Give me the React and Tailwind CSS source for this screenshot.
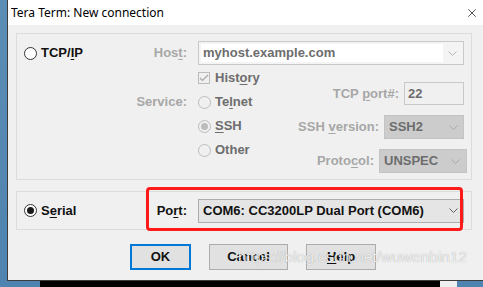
import { X } from "lucide-react";

const font = { fontFamily: '"Liberation Sans", Arial, sans-serif' };

function Chevron({ color = "#9a9a9a" }) {
  return (
    <svg width="9" height="5" viewBox="0 0 9 5" className="shrink-0">
      <polyline points="0.5,0.5 4.5,4.5 8.5,0.5" fill="none" stroke={color} strokeWidth="1" />
    </svg>
  );
}

function Radio({ checked, disabled }) {
  return (
    <span
      className={`w-[13px] h-[13px] rounded-full border flex items-center justify-center shrink-0 ${
        disabled ? "border-[#bcbcbc] bg-[#f0f0f0]" : "border-[#333] bg-white"
      }`}
    >
      {checked && (
        <span className={`w-[7px] h-[7px] rounded-full ${disabled ? "bg-[#bcbcbc]" : "bg-[#1a1a1a]"}`} />
      )}
    </span>
  );
}

function U({ children }) {
  return <span className="underline underline-offset-2 decoration-1">{children}</span>;
}

export default function App() {
  return (
    <div
      className="w-[483px] h-[287px] overflow-hidden bg-[#5b8db5] flex flex-col text-[13px] font-bold"
      style={font}
    >
      <div className="flex h-[281px]">
        {/* desktop strip */}
        <div className="w-[7px] bg-gradient-to-b from-[#5b8db5] to-[#4f84b0]" />
        {/* dialog */}
        <div className="flex-1 border-l border-b border-[#3c3c3c] flex flex-col relative">
          {/* title bar */}
          <div className="h-[25px] bg-white flex items-center justify-between pl-[3px] pr-[4px]">
            <span className="text-[12px] font-normal text-black" style={{ fontFamily: '"Noto Sans", "Liberation Sans", sans-serif' }}>
              Tera Term: New connection
            </span>
            <X className="w-[14px] h-[14px] text-[#111]" strokeWidth={1.2} />
          </div>

          {/* body */}
          <div className="flex-1 bg-[#f0f0f0] pl-[8px] pt-[8px]">
            {/* TCP/IP group */}
            <div className="w-[456px] h-[147px] border border-[#dcdcdc] flex flex-col">
              <div className="flex items-center h-[24px] mt-[7px]">
                <div className="w-[176px] flex items-center justify-between pl-[7px] pr-[6px] h-full">
                  <span className="flex items-center gap-[4px] text-[#111]">
                    <Radio />
                    <span>TCP/<U>I</U>P</span>
                  </span>
                  <span className="text-[#a7a7a7]">
                    Hos<U>t</U>:
                  </span>
                </div>
                <div className="ml-[5px] w-[266px] h-[24px] border border-[#c9c9c9] bg-[#f4f4f4] flex items-center p-[2px]">
                  <div className="flex-1 h-full bg-white flex items-center pl-[2px] text-[#6d6d6d]">
                    myhost.example.com
                  </div>
                  <div className="w-[18px] flex justify-center">
                    <Chevron color="#b5b5b5" />
                  </div>
                </div>
              </div>

              <div className="flex mt-[1px]">
                {/* labels */}
                <div className="w-[176px] pr-[6px] flex flex-col items-end">
                  <div className="h-[24px]" />
                  <div className="h-[24px] flex items-center text-[#a7a7a7]">Service:</div>
                </div>
                {/* checkbox + radios */}
                <div className="ml-[5px] w-[100px] flex flex-col text-[#6d6d6d]">
                  <div className="h-[24px] flex items-center gap-[5px]">
                    <span className="w-[12px] h-[12px] border border-[#bcbcbc] bg-[#f0f0f0] flex items-center justify-center">
                      <svg width="10" height="8" viewBox="0 0 10 8">
                        <polyline points="1,4 3.5,6.5 9,1" fill="none" stroke="#a8a8a8" strokeWidth="1.2" />
                      </svg>
                    </span>
                    <span>
                      Hist<U>o</U>ry
                    </span>
                  </div>
                  <div className="h-[24px] flex items-center gap-[4px]">
                    <Radio disabled />
                    <span>
                      Te<U>l</U>net
                    </span>
                  </div>
                  <div className="h-[24px] flex items-center gap-[4px]">
                    <Radio disabled checked />
                    <span>
                      <U>S</U>SH
                    </span>
                  </div>
                  <div className="h-[24px] flex items-center gap-[4px]">
                    <Radio disabled />
                    <span>Other</span>
                  </div>
                </div>
                {/* right column */}
                <div className="flex-1 flex flex-col items-end pr-[7px]">
                  <div className="mt-[16px] flex items-center gap-[5px]">
                    <span className="text-[#a7a7a7]">
                      TCP <U>p</U>ort#:
                    </span>
                    <div className="w-[60px] h-[23px] border border-[#c9c9c9] bg-[#f0f0f0] flex items-center pl-[3px] text-[#6d6d6d]">
                      22
                    </div>
                  </div>
                  <div className="mt-[10px] flex items-center gap-[5px]">
                    <span className="text-[#a7a7a7]">
                      SSH <U>v</U>ersion:
                    </span>
                    <div className="w-[80px] h-[24px] border border-[#c4c4c4] bg-[#cccccc] flex items-center justify-between pl-[4px] pr-[5px] text-[#6d6d6d]">
                      SSH2
                      <Chevron color="#a9a9a9" />
                    </div>
                  </div>
                  <div className="mt-[10px] -mr-[3px] flex items-center gap-[5px]">
                    <span className="text-[#a7a7a7]">
                      Proto<U>c</U>ol:
                    </span>
                    <div className="w-[88px] h-[24px] border border-[#c4c4c4] bg-[#cccccc] flex items-center justify-between pl-[4px] pr-[6px] text-[#6d6d6d]">
                      UNSPEC
                      <Chevron color="#a9a9a9" />
                    </div>
                  </div>
                </div>
              </div>
            </div>

            {/* Serial group */}
            <div className="mt-[11px] w-[456px] h-[39px] border border-[#dcdcdc] flex items-center">
              <div className="w-[176px] flex items-center justify-between pl-[7px] pr-[6px]">
                <span className="flex items-center gap-[4px] text-[#111]">
                  <Radio checked />
                  <span>
                    S<U>e</U>rial
                  </span>
                </span>
                <span className="text-[#111]">
                  Po<U>r</U>t:
                </span>
              </div>
              <div className="ml-[5px] w-[266px] h-[24px] border border-[#adadad] bg-[#e5e5e5] flex items-center justify-between pl-[4px] pr-[5px] text-[#111]">
                COM6: CC3200LP Dual Port (COM6)
                <Chevron color="#606060" />
              </div>
            </div>

            {/* buttons */}
            <div className="mt-[14px] flex pl-[114px] gap-[18px]">
              <button className="w-[61px] h-[26px] border-2 border-[#0078d7] bg-[#e1e1e1] text-[#111]">OK</button>
              <button className="w-[79px] h-[26px] border border-[#adadad] bg-[#e1e1e1] text-[#111]">Cancel</button>
              <button className="w-[70px] h-[26px] border border-[#adadad] bg-[#e1e1e1] text-[#111]">
                <U>H</U>elp
              </button>
            </div>
          </div>

          {/* annotation */}
          <div className="absolute left-[138px] top-[187px] w-[317px] h-[44px] border-[3px] border-[#ff1a1a] rounded-[4px] pointer-events-none" />

          {/* watermark */}
          <div className="absolute left-[230px] top-[245px] whitespace-nowrap text-[15.5px] font-normal text-[#f7f7f7]/90 [text-shadow:0_0_1px_rgba(0,0,0,0.35)] pointer-events-none">
            https://blog.csdn.net/wuwenbin12
          </div>
        </div>
      </div>

      {/* bottom strip */}
      <div className="flex h-[6px]">
        <div className="w-[40px] bg-[#4f84b0]" />
        <div className="w-[400px] bg-black" />
        <div className="w-[17px] bg-[#f0f0f0]" />
        <div className="flex-1 bg-[#4f84b0]" />
      </div>
    </div>
  );
}
